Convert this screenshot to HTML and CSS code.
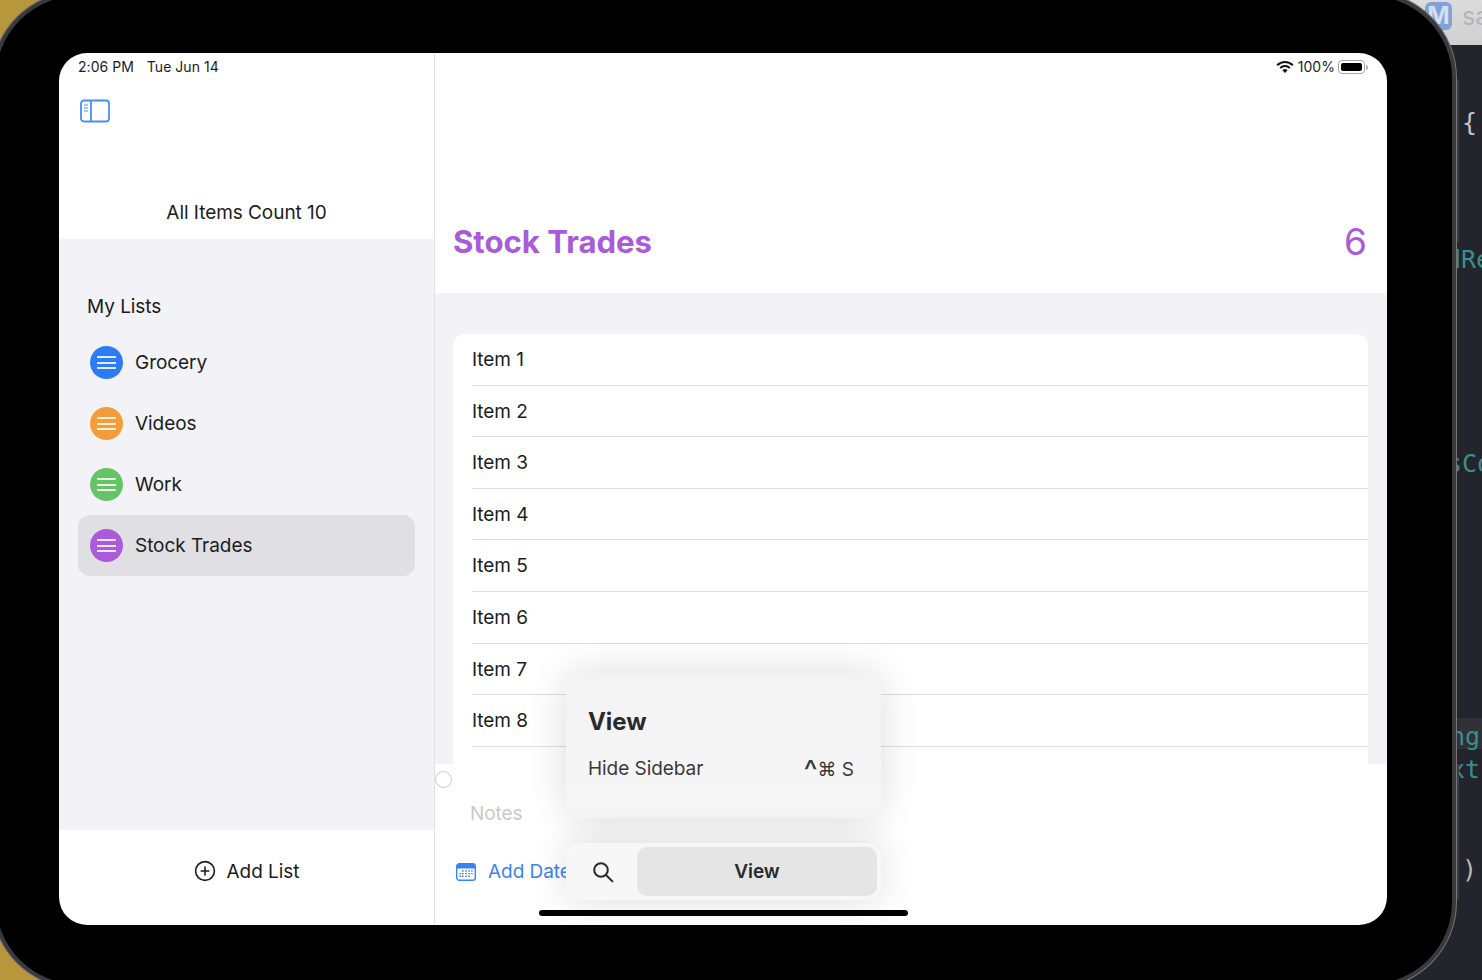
FILE: index.html
```html
<!DOCTYPE html>
<html lang="en">
<head>
    <meta charset="UTF-8" />
    <title>Lists</title>
    <link rel="stylesheet" href="styles.css">
</head>
<body>

<!-- Lo que se ve detras del simulador -->
<div class="desk">
    <div class="wall wall-top"></div>
    <div class="wall wall-bottom"></div>
    <div class="titlebar"></div>
    <div class="app-icon">M</div>
    <div class="code code-title">sa</div>
    <div class="line-hl"></div>
    <div class="code code-brace">{</div>
    <div class="code code-a">dRe</div>
    <div class="code code-b">sCo</div>
    <div class="code code-c">ng,</div>
    <div class="code code-d">xt</div>
    <div class="code code-paren">)</div>
    <div class="side-key side-key-top"></div>
    <div class="side-key side-key-bottom"></div>
</div>

<div class="bezel">
    <div class="screen">

        <aside class="sidebar">
            <div class="side-head">
                <div class="status">
                    <span>2:06 PM</span>
                    <span>Tue Jun 14</span>
                </div>
                <svg class="toggle-icon" width="30" height="24" viewBox="0 0 30 24" fill="none" stroke="#4a8cf7">
                    <rect x="1" y="1.5" width="28" height="21" rx="3" stroke-width="1.8"/>
                    <path d="M11 1.5v21" stroke-width="1.8"/>
                    <path d="M4 6h4M4 9h4M4 12h4" stroke-width="1.1"/>
                </svg>
                <div class="all-count">All Items Count 10</div>
            </div>

            <div class="side-list">
                <div class="side-title">My Lists</div>
                <div class="list-row">
                    <span class="dot dot-blue"><i></i><i></i><i></i></span>
                    <span>Grocery</span>
                </div>
                <div class="list-row">
                    <span class="dot dot-orange"><i></i><i></i><i></i></span>
                    <span>Videos</span>
                </div>
                <div class="list-row">
                    <span class="dot dot-green"><i></i><i></i><i></i></span>
                    <span>Work</span>
                </div>
                <div class="list-row selected">
                    <span class="dot dot-purple"><i></i><i></i><i></i></span>
                    <span>Stock Trades</span>
                </div>
            </div>

            <div class="side-foot">
                <svg width="22" height="22" viewBox="0 0 22 22" fill="none" stroke="#1c1c1e" stroke-width="1.6">
                    <circle cx="11" cy="11" r="9.4"/>
                    <path d="M11 6.6v8.8M6.6 11h8.8"/>
                </svg>
                <span>Add List</span>
            </div>
        </aside>

        <main class="detail">
            <div class="detail-head">
                <div class="status status-right">
                    <svg width="18" height="14" viewBox="0 0 18 14" fill="none" stroke="#111" stroke-width="2">
                        <path d="M1.2 5.2a11 11 0 0 1 15.6 0"/>
                        <path d="M4.2 8a7 7 0 0 1 9.6 0"/>
                        <path d="M9 13l-2.6-2.7a3.7 3.7 0 0 1 5.2 0z" fill="#111" stroke="none"/>
                    </svg>
                    <span>100%</span>
                    <span class="battery"><i></i></span>
                    <span class="battery-nub"></span>
                </div>
                <div class="title-row">
                    <h1>Stock Trades</h1>
                    <span class="title-count">6</span>
                </div>
            </div>

            <div class="items-wrap">
                <div class="items">
                    <div class="item">Item 1</div>
                    <div class="item">Item 2</div>
                    <div class="item">Item 3</div>
                    <div class="item">Item 4</div>
                    <div class="item">Item 5</div>
                    <div class="item">Item 6</div>
                    <div class="item">Item 7</div>
                    <div class="item">Item 8</div>
                </div>
            </div>

            <div class="compose">
                <div class="radio"></div>
                <div class="notes">Notes</div>
                <div class="add-date">
                    <svg width="20" height="18" viewBox="0 0 20 18">
                        <rect x="0.7" y="0.7" width="18.6" height="16.6" rx="2.6" fill="#fff" stroke="#3b82f6" stroke-width="1.4"/>
                        <path d="M1 3.4a2.4 2.4 0 0 1 2.4-2.4h13.2a2.4 2.4 0 0 1 2.4 2.4v2H1z" fill="#3b82f6"/>
                        <path d="M6 8h1.6M9.2 8h1.6M12.4 8h1.6M15.2 8h1.4M3.4 10.6H5M6 10.6h1.6M9.2 10.6h1.6M12.4 10.6h1.6M15.2 10.6h1.4M3.4 13.2H5M6 13.2h1.6M9.2 13.2h1.6M12.4 13.2h1.6" stroke="#3b82f6" stroke-width="1.4"/>
                    </svg>
                    <span>Add Date</span>
                </div>
            </div>
        </main>

        <!-- Menu flotante -->
        <div class="menu">
            <div class="menu-title">View</div>
            <div class="menu-row">
                <span>Hide Sidebar</span>
                <span class="shortcut"><span class="shortcut-ctrl">^</span><span class="shortcut-keys">⌘</span> S</span>
            </div>
        </div>

        <div class="toolbar">
            <div class="toolbar-search">
                <svg width="22" height="22" viewBox="0 0 22 22" fill="none" stroke="#2a2a2c" stroke-width="2">
                    <circle cx="9" cy="9" r="6.8"/>
                    <path d="M14 14l6.4 6.4" stroke-linecap="round"/>
                </svg>
            </div>
            <div class="toolbar-view">View</div>
        </div>

        <div class="home-bar"></div>
    </div>
</div>

</body>
</html>
```

FILE: styles.css
```css
* {
    box-sizing: border-box;
}

body {
    margin: 0;
    width: 1482px;
    height: 980px;
    overflow: hidden;
    position: relative;
    background-color: #24242c;
    font-family: Inter, "Noto Sans", sans-serif;
    font-size: 19px;
    letter-spacing: -0.05px;
    color: #1c1c1e;
}

/* Fondo detras del simulador */
.desk div {
    position: absolute;
}

.wall {
    left: 0;
    width: 120px;
    height: 120px;
    background-color: #b8963c;
}

.wall-top {
    top: 0;
}

.wall-bottom {
    bottom: 0;
}

.titlebar {
    top: 0;
    left: 1380px;
    width: 102px;
    height: 45px;
    background: linear-gradient(#dcdcdc, #cfcfd0);
}

.app-icon {
    top: 2px;
    left: 1425px;
    width: 27px;
    height: 28px;
    border-radius: 6px;
    background-color: #7fa3d8;
    color: #d4dff2;
    font-size: 24px;
    font-weight: 700;
    text-align: center;
    line-height: 28px;
}

.code {
    font-family: "DejaVu Sans Mono", monospace;
    font-size: 25px;
    line-height: 30px;
    color: #3a8f8c;
    white-space: nowrap;
}

.code-title {
    top: 1px;
    left: 1462px;
    color: #b4b4b6;
    font-family: Inter, sans-serif;
}

.code-brace {
    top: 108px;
    left: 1462px;
    color: #c4c4c4;
}

.code-a {
    top: 245px;
    left: 1446px;
}

.code-b {
    top: 449px;
    left: 1447px;
}

.code-c {
    top: 722px;
    left: 1450px;
}

.code-d {
    top: 755px;
    left: 1450px;
}

.code-paren {
    top: 855px;
    left: 1462px;
    color: #b8b8b8;
}

.line-hl {
    top: 718px;
    left: 1456px;
    width: 26px;
    height: 31px;
    background-color: #2f3038;
}

.side-key {
    left: 1456px;
    width: 3px;
    background-color: #3e3e42;
}

.side-key-top {
    top: 80px;
    height: 162px;
}

.side-key-bottom {
    top: 764px;
    height: 135px;
}

/* Marco del iPad */
.bezel {
    position: relative;
    width: 1464px;
    height: 996px;
    margin: -8px 0 0 -8px;
    padding: 57px 0 0 63px;
    background-color: #000;
    border: 4px solid #3a3a3c;
    border-radius: 86px;
    box-shadow: 0 0 0 1px #77777a;
}

.screen {
    position: relative;
    display: flex;
    width: 1328px;
    height: 872px;
    background-color: #fff;
    border-radius: 28px;
    overflow: hidden;
}

.status {
    display: flex;
    gap: 13px;
    font-size: 14px;
    line-height: 18px;
    letter-spacing: 0.03px;
    padding: 5px 0 0 19px;
}

/* Barra lateral */
.sidebar {
    display: flex;
    flex-direction: column;
    width: 376px;
    border-right: 1px solid #e2e2e6;
}

.side-head {
    height: 186px;
}

.toggle-icon {
    display: block;
    margin: 23px 0 0 21px;
}

.all-count {
    margin-top: 76px;
    text-align: center;
    line-height: 28px;
}

.side-list {
    flex: 1;
    padding-top: 53px;
    background-color: #f2f2f7;
}

.side-title {
    padding-left: 28px;
    margin-bottom: 10px;
    line-height: 30px;
}

.list-row {
    display: flex;
    align-items: center;
    gap: 12px;
    width: 337px;
    height: 61px;
    margin-left: 19px;
    padding-left: 12px;
    border-radius: 12px;
}

.list-row.selected {
    background-color: #dfdfe4;
}

.dot {
    display: flex;
    flex-direction: column;
    justify-content: center;
    align-items: center;
    gap: 3.5px;
    width: 33px;
    height: 33px;
    border-radius: 50%;
}

.dot i {
    display: block;
    width: 19px;
    height: 2px;
    background-color: rgba(255, 255, 255, 0.85);
}

.dot-blue {
    background-color: #2f7bf6;
}

.dot-orange {
    background-color: #f49c37;
}

.dot-green {
    background-color: #65c466;
}

.dot-purple {
    background-color: #a95bd9;
}

.side-foot {
    display: flex;
    justify-content: center;
    align-items: flex-start;
    gap: 11px;
    height: 95px;
    padding-top: 28px;
    line-height: 28px;
}

.side-foot svg {
    margin-top: 2px;
}

/* Detalle */
.detail {
    flex: 1;
    display: flex;
    flex-direction: column;
    min-width: 0;
}

.detail-head {
    height: 240px;
}

.status-right {
    justify-content: flex-end;
    align-items: center;
    gap: 3px;
    padding: 5px 19px 0 0;
}

.status-right svg {
    margin-right: 1px;
}

.battery {
    width: 27px;
    height: 14px;
    padding: 2px;
    border: 1px solid #a8a8a8;
    border-radius: 4px;
}

.battery i {
    display: block;
    height: 100%;
    background-color: #000;
    border-radius: 2px;
}

.battery-nub {
    width: 2px;
    height: 5px;
    margin-left: -2px;
    background-color: #b4b4b4;
    border-radius: 0 2px 2px 0;
}

.title-row {
    display: flex;
    justify-content: space-between;
    align-items: center;
    margin-top: 146px;
    padding: 0 20px 0 18px;
    color: #a95bd9;
}

h1 {
    margin: 0;
    font-size: 31.2px;
    line-height: 40px;
    font-weight: 700;
}

.title-count {
    font-size: 37px;
    line-height: 40px;
}

.items-wrap {
    height: 471px;
    padding: 41px 19px 0 18px;
    background-color: #f2f2f7;
    overflow: hidden;
}

.items {
    background-color: #fff;
    border-radius: 12px 12px 0 0;
    padding-left: 19px;
    height: 430px;
}

.item {
    height: 51.6px;
    border-bottom: 1px solid #dedee0;
    line-height: 51.6px;
}

.compose {
    flex: 1;
}

.radio {
    width: 17px;
    height: 17px;
    margin-top: 7px;
    border: 1.5px solid #c8c8ca;
    border-radius: 50%;
}

.notes {
    margin: 12px 0 0 35px;
    line-height: 28px;
    color: #c9c9cc;
}

.add-date {
    display: flex;
    align-items: center;
    gap: 12px;
    margin: 30px 0 0 21px;
    line-height: 28px;
    color: #3b82f6;
}

/* Menu flotante */
.menu {
    position: absolute;
    left: 507px;
    top: 620px;
    width: 315px;
    height: 145px;
    padding: 30px 27px 0 22px;
    background: linear-gradient(#f3f3f3, #f6f6f6);
    border-radius: 16px;
    box-shadow: 0 0 40px rgba(0, 0, 0, 0.14);
}

.menu-title {
    font-size: 24px;
    line-height: 38px;
    font-weight: 700;
    color: #2a2a2c;
}

.menu-row {
    display: flex;
    justify-content: space-between;
    margin-top: 14px;
    line-height: 28px;
    color: #3a3a3c;
}

.shortcut-ctrl {
    font-size: 30px;
    line-height: 0;
    vertical-align: -5px;
}

.shortcut-keys {
    font-family: "DejaVu Sans", sans-serif;
}

.toolbar {
    position: absolute;
    left: 507px;
    top: 790px;
    display: flex;
    width: 315px;
    height: 57px;
    padding: 4px;
    background-color: #f7f7f7;
    border-radius: 15px;
    box-shadow: 0 0 40px rgba(0, 0, 0, 0.14);
}

.toolbar-search {
    display: flex;
    align-items: center;
    width: 67px;
    padding-left: 22px;
}

.toolbar-view {
    flex: 1;
    background-color: #e5e5e6;
    border-radius: 10px;
    text-align: center;
    font-weight: 600;
    line-height: 49px;
    color: #2a2a2c;
}

.home-bar {
    position: absolute;
    left: 480px;
    top: 857px;
    width: 369px;
    height: 6px;
    background-color: #000;
    border-radius: 3px;
}
```
